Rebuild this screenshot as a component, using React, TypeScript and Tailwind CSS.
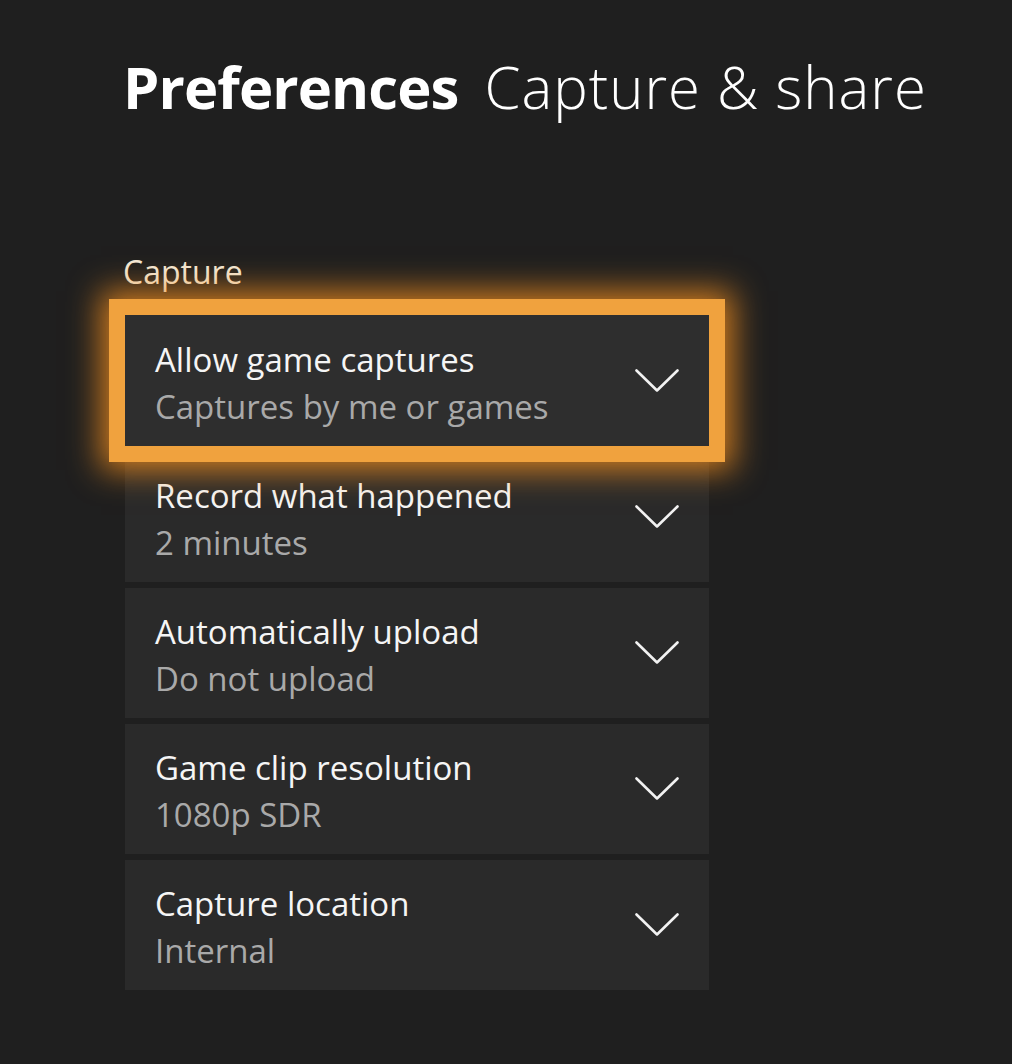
const rows = [
  { title: "Allow game captures", value: "Captures by me or games", focused: true },
  { title: "Record what happened", value: "2 minutes" },
  { title: "Automatically upload", value: "Do not upload" },
  { title: "Game clip resolution", value: "1080p SDR" },
  { title: "Capture location", value: "Internal" },
];

function Chevron() {
  return (
    <svg width="44" height="24" viewBox="0 0 44 24" fill="none" className="shrink-0">
      <polyline points="1.5,1.5 22,21.5 42.5,1.5" stroke="#f2f2f2" strokeWidth="2.6" strokeLinecap="round" strokeLinejoin="round" />
    </svg>
  );
}

export default function App() {
  return (
    <div
      className="min-h-[1064px] w-full bg-[#1f1f1f] pl-[123px] text-white"
      style={{ fontFamily: '"Open Sans", "Noto Sans", sans-serif' }}
    >
      <h1 className="flex items-baseline gap-[26px] pt-[58px] text-[58px] leading-none">
        <span className="font-bold tracking-[-0.9px]">Preferences</span>
        <span className="font-light tracking-[1px]">Capture &amp; share</span>
      </h1>

      <div className="mt-[140px] text-[32px] leading-none text-[#f3e8d6]">Capture</div>

      <div className="ml-[2px] mt-[27px] flex w-[584px] flex-col gap-[6px]">
        {rows.map((r) => (
          <div
            key={r.title}
            className={
              r.focused
                ? "relative z-10 flex h-[131px] items-center justify-between bg-[#2e2e2e] pl-[30px] pr-[30px] outline-[16px] outline-solid outline-[#f0a23e] shadow-[0_0_30px_24px_rgba(238,140,30,0.85)]"
                : "flex h-[130px] items-center justify-between bg-[#2a2a2a] pl-[30px] pr-[30px]"
            }
          >
            <div className="flex flex-col pt-[4px]">
              <span className="text-[33px] leading-[47px] text-[#f5f5f5]">{r.title}</span>
              <span className="text-[33px] leading-[47px] text-[#a9a9a9]">{r.value}</span>
            </div>
            <Chevron />
          </div>
        ))}
      </div>
    </div>
  );
}
